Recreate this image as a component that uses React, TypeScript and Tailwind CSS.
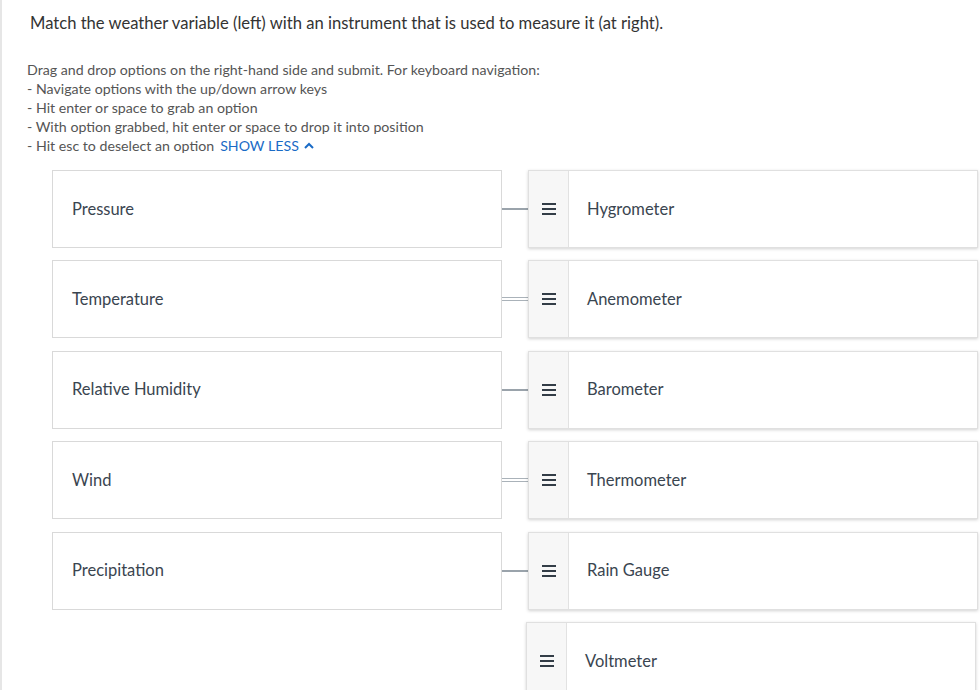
const leftItems = ["Pressure", "Temperature", "Relative Humidity", "Wind", "Precipitation"];
const rightItems = ["Hygrometer", "Anemometer", "Barometer", "Thermometer", "Rain Gauge", "Voltmeter"];
// connectors alternate: single line vs. hollow double line
const doubleLine = [false, true, false, true, false];

const Handle = () => (
  <div className="flex w-[40px] shrink-0 items-center justify-center border-r border-[#e2e2e2] bg-[#f7f7f7]">
    <div className="flex flex-col gap-[3px]">
      <span className="block h-[2px] w-[14px] bg-[#333d47]" />
      <span className="block h-[2px] w-[14px] bg-[#333d47]" />
      <span className="block h-[2px] w-[14px] bg-[#333d47]" />
    </div>
  </div>
);

const RightCard = ({ label }: { label: string }) => (
  <div className="flex h-[78px] w-[450px] shrink-0 border border-[#e0e0e0] bg-white shadow-[0_1px_3px_rgba(0,0,0,0.18)]">
    <Handle />
    <div className="flex items-center pl-[18px] text-[16.5px] text-[#3a4550]">{label}</div>
  </div>
);

export default function App() {
  return (
    <div
      className="min-h-[690px] border-l-2 border-[#e6e6e6] bg-white"
      style={{ fontFamily: "Lato, 'Liberation Sans', sans-serif" }}
    >
      <div className="pl-[28px] pt-[11px]">
        <h1 className="text-[16.6px] leading-[24px] text-[#333]">
          Match the weather variable (left) with an instrument that is used to measure it (at right).
        </h1>
      </div>

      <div className="mt-[25px] pl-[25px] text-[14.2px] leading-[19px] text-[#555]">
        <p>Drag and drop options on the right-hand side and submit. For keyboard navigation:</p>
        <p>- Navigate options with the up/down arrow keys</p>
        <p>- Hit enter or space to grab an option</p>
        <p>- With option grabbed, hit enter or space to drop it into position</p>
        <p className="flex items-center">
          - Hit esc to deselect an option
          <span className="ml-[6px] flex items-center gap-[5px] text-[#1a6bc6]">
            SHOW LESS
            <svg width="10" height="7" viewBox="0 0 10 7" fill="none">
              <path d="M1 6L5 2L9 6" stroke="#1a6bc6" strokeWidth="2" />
            </svg>
          </span>
        </p>
      </div>

      <div className="mt-[15px] flex flex-col gap-[12.4px] pl-[50px]">
        {rightItems.map((item, i) => (
          <div key={item} className="flex items-center">
            {i < leftItems.length ? (
              <>
                <div className="flex h-[78px] w-[450px] shrink-0 items-center border border-[#d9d9d9] bg-white pl-[19px] text-[16.5px] text-[#3a4550]">
                  {leftItems[i]}
                </div>
                {doubleLine[i] ? (
                  <div className="h-[4px] w-[26px] border-y border-[#aab2b9] bg-white" />
                ) : (
                  <div className="h-[2px] w-[26px] bg-[#9aa3ab]" />
                )}
              </>
            ) : (
              <div className="w-[474px] shrink-0" />
            )}
            <RightCard label={item} />
          </div>
        ))}
      </div>
    </div>
  );
}
